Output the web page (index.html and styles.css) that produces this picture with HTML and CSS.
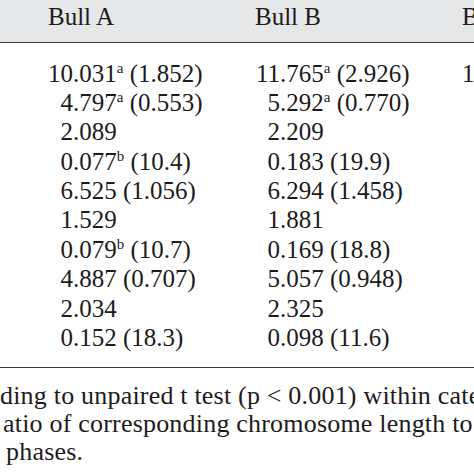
FILE: index.html
```html
<!DOCTYPE html>
<html>
<head>
<meta charset="utf-8">
<link rel="stylesheet" href="styles.css">
</head>
<body>
<div class="page">
  <div class="head">
    <div class="row"><span></span><span>Bull A</span><span>Bull B</span><span>B</span></div>
  </div>
  <div class="tbody">
    <div class="row"><span></span><span><span class="int">10</span>.031<sup>a</sup> (1.852)</span><span><span class="int">11</span>.765<sup>a</sup> (2.926)</span><span>1</span></div>
    <div class="row"><span></span><span><span class="int">4</span>.797<sup>a</sup> (0.553)</span><span><span class="int">5</span>.292<sup>a</sup> (0.770)</span><span></span></div>
    <div class="row"><span></span><span><span class="int">2</span>.089</span><span><span class="int">2</span>.209</span><span></span></div>
    <div class="row"><span></span><span><span class="int">0</span>.077<sup>b</sup> (10.4)</span><span><span class="int">0</span>.183 (19.9)</span><span></span></div>
    <div class="row"><span></span><span><span class="int">6</span>.525 (1.056)</span><span><span class="int">6</span>.294 (1.458)</span><span></span></div>
    <div class="row"><span></span><span><span class="int">1</span>.529</span><span><span class="int">1</span>.881</span><span></span></div>
    <div class="row"><span></span><span><span class="int">0</span>.079<sup>b</sup> (10.7)</span><span><span class="int">0</span>.169 (18.8)</span><span></span></div>
    <div class="row"><span></span><span><span class="int">4</span>.887 (0.707)</span><span><span class="int">5</span>.057 (0.948)</span><span></span></div>
    <div class="row"><span></span><span><span class="int">2</span>.034</span><span><span class="int">2</span>.325</span><span></span></div>
    <div class="row"><span></span><span><span class="int">0</span>.152 (18.3)</span><span><span class="int">0</span>.098 (11.6)</span><span></span></div>
  </div>
  <div class="foot">
    <div class="fl fl1">ding to unpaired t test (p &lt; 0.001) within cate</div>
    <div class="fl fl2">atio of corresponding chromosome length to</div>
    <div class="fl fl3">phases.</div>
  </div>
</div>
</body>
</html>
```

FILE: styles.css
```css
html, body {
  margin: 0;
  padding: 0;
  width: 474px;
  height: 474px;
  overflow: hidden;
  background: #ffffff;
}
body {
  font-family: "Liberation Serif", "Times New Roman", serif;
  font-size: 25px;
  color: #1e1b1c;
}
.page {
  width: 720px;
}
.head {
  background: #e6e7e8;
  height: 40px;
  padding-top: 2px;
  border-bottom: 1.5px solid #3a3a3a;
}
.row {
  display: grid;
  grid-template-columns: 48px 207px 207px 207px;
  height: 29.4px;
  line-height: 29.4px;
  white-space: nowrap;
}
.tbody {
  padding: 15.5px 0 14.5px;
  border-bottom: 1.5px solid #3a3a3a;
}
.int {
  display: inline-block;
  width: 25px;
  text-align: right;
}
sup {
  font-size: 15px;
  line-height: 0;
  vertical-align: 9px;
}
.foot {
  padding-top: 14.5px;
  font-size: 26px;
  line-height: 28px;
  letter-spacing: 0.2px;
}
.fl {
  white-space: nowrap;
}
.fl1 { padding-left: 0; }
.fl2 { padding-left: 3px; }
.fl3 { padding-left: 6px; }
```
